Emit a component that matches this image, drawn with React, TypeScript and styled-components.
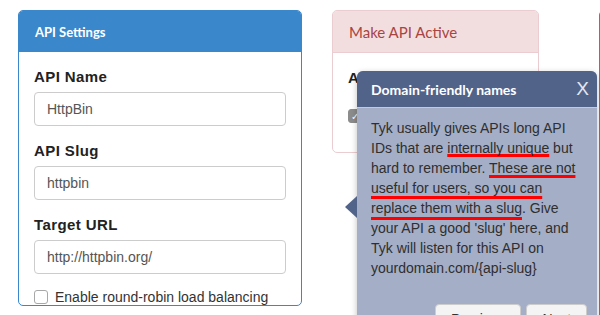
import * as React from 'react';
import styled, { createGlobalStyle, css } from 'styled-components';

type Tone = 'primary' | 'danger';

const GlobalStyle = createGlobalStyle`
  html, body {
    margin: 0;
    padding: 0;
    background: #fff;
  }
  body {
    font-family: "Liberation Sans", Arial, sans-serif;
    color: #333;
  }
`;

const Page = styled.div`
  position: relative;
  width: 600px;
  height: 315px;
  overflow: hidden;
  display: flex;
  align-items: flex-start;
  gap: 30px;
  padding: 10px 0 0 18px;
  box-sizing: border-box;
`;

const Panel = styled.div<{ $tone: Tone; $width: number; $push?: number }>`
  flex: 0 0 auto;
  width: ${(p) => p.$width}px;
  margin-left: ${(p) => p.$push || 0}px;
  border: 1px solid ${(p) => (p.$tone === 'danger' ? '#ebccd1' : '#3a87cc')};
  border-radius: 5px;
  background: #fff;
  box-sizing: border-box;
`;

const PanelHeading = styled.div<{ $tone: Tone }>`
  height: 41px;
  display: flex;
  align-items: center;
  padding: 0 16px;
  border-radius: 4px 4px 0 0;
  font-family: Lato, "Liberation Sans", sans-serif;
  ${(p) =>
    p.$tone === 'danger'
      ? css`
          background: #f2dede;
          color: #a94442;
          border-bottom: 1px solid #ebccd1;
          font-size: 15px;
        `
      : css`
          background: #3a87cc;
          color: #fff;
          font-weight: 700;
          font-size: 13px;
        `}
`;

const PanelBody = styled.div<{ $height?: number }>`
  padding: 15px 15px 0;
  ${(p) => p.$height && `height: ${p.$height}px;`}
`;

const FormGroup = styled.div`
  margin-bottom: 15px;
`;

const Label = styled.label`
  display: block;
  font-weight: 700;
  font-size: 15px;
  letter-spacing: 0.4px;
  line-height: 20px;
  margin-bottom: 5px;
  color: #222;
`;

const Input = styled.input`
  display: block;
  width: 100%;
  height: 34px;
  box-sizing: border-box;
  padding: 6px 12px;
  border: 1px solid #ccc;
  border-radius: 4px;
  font-family: "Liberation Sans", Arial, sans-serif;
  font-size: 14px;
  color: #555;
  background: #fff;
`;

const CheckRow = styled.div`
  display: flex;
  align-items: center;
  gap: 7px;
  font-size: 14px;
  color: #333;
`;

const CheckBox = styled.span<{ $checked?: boolean }>`
  width: 12px;
  height: 12px;
  border-radius: 3px;
  flex: 0 0 auto;
  display: flex;
  align-items: center;
  justify-content: center;
  font-size: 10px;
  color: #fff;
  ${(p) =>
    p.$checked
      ? `background: #8c8c8c; border: 1px solid #8c8c8c;`
      : `background: #fff; border: 1px solid #a8a8a8;`}
`;

const Popover = styled.div`
  position: absolute;
  left: 357px;
  top: 71px;
  width: 240px;
  border-radius: 6px;
  background: #a4aec6;
  box-shadow: 0 2px 6px rgba(0, 0, 0, 0.25);

  &::before {
    content: '';
    position: absolute;
    left: -12px;
    top: 125px;
    border-top: 11px solid transparent;
    border-bottom: 11px solid transparent;
    border-right: 12px solid #52638a;
  }
`;

const PopoverHeader = styled.div`
  height: 36px;
  display: flex;
  align-items: center;
  justify-content: space-between;
  padding: 0 8px 0 14px;
  background: #52638a;
  border-radius: 6px 6px 0 0;
  border-bottom: 1px solid #c3cadb;
  color: #fff;
  font-family: Lato, "Liberation Sans", sans-serif;
  font-weight: 700;
  font-size: 14px;
`;

const Close = styled.span`
  font-family: "Liberation Sans", Arial, sans-serif;
  font-weight: 400;
  font-size: 19px;
  color: #e3e7ef;
`;

const PopoverBody = styled.div`
  padding: 10px 12px 10px 14px;
  font-size: 14px;
  line-height: 20px;
  color: #2f2f2f;
`;

const Mark = styled.span<{ $offset: number }>`
  text-decoration: underline;
  text-decoration-color: #ff0000;
  text-decoration-thickness: 3px;
  text-underline-offset: ${(p) => p.$offset}px;
  text-decoration-skip-ink: none;
`;

const PopoverFooter = styled.div`
  display: flex;
  align-items: flex-start;
  gap: 5px;
  padding: 16px 8px 10px 8px;
`;

const Step = styled.span`
  flex: 0 0 65px;
  font-size: 12px;
  color: #333;
  margin-top: 10px;
`;

const Button = styled.button`
  flex: 0 0 auto;
  height: 30px;
  padding: 0 15px;
  border: 1px solid #ccc;
  border-radius: 4px;
  background: #f4f4f4;
  font-family: "Liberation Sans", Arial, sans-serif;
  font-size: 14px;
  color: #333;
`;

export default function App() {
  return (
    <>
      <GlobalStyle />
      <Page>
        <Panel $tone="primary" $width={284}>
          <PanelHeading $tone="primary">API Settings</PanelHeading>
          <PanelBody>
            <FormGroup>
              <Label>API Name</Label>
              <Input defaultValue="HttpBin" />
            </FormGroup>
            <FormGroup>
              <Label>API Slug</Label>
              <Input defaultValue="httpbin" />
            </FormGroup>
            <FormGroup>
              <Label>Target URL</Label>
              <Input defaultValue="http://httpbin.org/" />
            </FormGroup>
            <CheckRow>
              <CheckBox />
              Enable round-robin load balancing
            </CheckRow>
          </PanelBody>
        </Panel>

        <Panel $tone="danger" $width={207}>
          <PanelHeading $tone="danger">Make API Active</PanelHeading>
          <PanelBody $height={84}>
            <Label>Active</Label>
            <CheckRow style={{ marginTop: 20 }}>
              <CheckBox $checked>✓</CheckBox>
              Active
            </CheckRow>
          </PanelBody>
        </Panel>

        <Panel $tone="primary" $width={200} $push={30}>
          <PanelHeading $tone="primary" />
          <PanelBody $height={300} />
        </Panel>

        <Popover>
          <PopoverHeader>
            Domain-friendly names
            <Close>X</Close>
          </PopoverHeader>
          <PopoverBody>
            Tyk usually gives APIs long API IDs that are{' '}
            <Mark $offset={1}>internally unique</Mark> but hard to remember.{' '}
            <Mark $offset={2}>These are not</Mark>{' '}
            <Mark $offset={3}>useful for users, so you can</Mark>{' '}
            <Mark $offset={4}>replace them with a slug</Mark>. Give your API a
            good 'slug' here, and Tyk will listen for this API on
            yourdomain.com/{'{api-slug}'}
          </PopoverBody>
          <PopoverFooter>
            <Step>Step 3 of 10</Step>
            <Button>Previous</Button>
            <Button>Next</Button>
          </PopoverFooter>
        </Popover>
      </Page>
    </>
  );
}
